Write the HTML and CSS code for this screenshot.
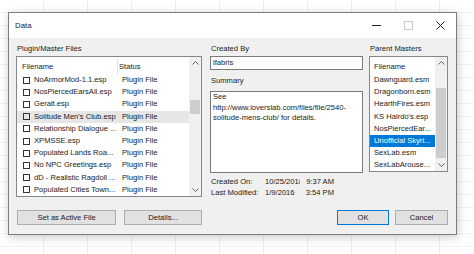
FILE: index.html
```html
<!DOCTYPE html>
<html lang="en">
<head>
  <meta charset="UTF-8">
  <meta name="viewport" content="width=device-width, initial-scale=1.0">
  <title>Data</title>
  <link rel="stylesheet" href="styles.css">
</head>
<body>
  <div class="desk">
    <div class="dialog">
      <div class="titlebar">
        <span class="title">Data</span>
        <div class="controls">
          <span class="ctl"><svg width="9" height="9" viewBox="0 0 9 9"><line x1="0" y1="4.5" x2="9" y2="4.5" stroke="#222" stroke-width="1"/></svg></span>
          <span class="ctl"><svg width="9" height="9" viewBox="0 0 9 9"><rect x="0.5" y="0.5" width="8" height="8" fill="none" stroke="#c8c8c8" stroke-width="1"/></svg></span>
          <span class="ctl"><svg width="9" height="9" viewBox="0 0 9 9"><path d="M0.5 0.5 L8.5 8.5 M8.5 0.5 L0.5 8.5" stroke="#222" stroke-width="1"/></svg></span>
        </div>
      </div>

      <div class="content">
        <div class="columns">
          <!-- plugin / master files -->
          <div class="col col-files">
            <div class="label">Plugin/Master Files</div>
            <div class="listbox files">
              <div class="list-body">
                <div class="list-head">
                  <span class="h-name">Filename</span>
                  <span class="h-status">Status</span>
                </div>
                <div class="row"><span class="c-name"><i class="check"></i>NoArmorMod-1.1.esp</span><span class="c-status">Plugin File</span></div>
                <div class="row"><span class="c-name"><i class="check"></i>NosPiercedEarsAll.esp</span><span class="c-status">Plugin File</span></div>
                <div class="row"><span class="c-name"><i class="check"></i>Geralt.esp</span><span class="c-status">Plugin File</span></div>
                <div class="row hover"><span class="c-name"><i class="check"></i>Solitude Men's Club.esp</span><span class="c-status">Plugin File</span></div>
                <div class="row"><span class="c-name"><i class="check"></i>Relationship Dialogue ...</span><span class="c-status">Plugin File</span></div>
                <div class="row"><span class="c-name"><i class="check"></i>XPMSSE.esp</span><span class="c-status">Plugin File</span></div>
                <div class="row"><span class="c-name"><i class="check"></i>Populated Lands Roa...</span><span class="c-status">Plugin File</span></div>
                <div class="row"><span class="c-name"><i class="check"></i>No NPC Greetings.esp</span><span class="c-status">Plugin File</span></div>
                <div class="row"><span class="c-name"><i class="check"></i>dD - Realistic Ragdoll ...</span><span class="c-status">Plugin File</span></div>
                <div class="row"><span class="c-name"><i class="check"></i>Populated Cities Town...</span><span class="c-status">Plugin File</span></div>
                <div class="row"><span class="c-name"><i class="check"></i></span></div>
              </div>
              <div class="scrollbar">
                <span class="arrow"><svg width="7" height="4" viewBox="0 0 7 4"><polyline points="0.5,3.5 3.5,0.5 6.5,3.5" fill="none" stroke="#606060"/></svg></span>
                <div class="track"><div class="thumb files-thumb"></div></div>
                <span class="arrow"><svg width="7" height="4" viewBox="0 0 7 4"><polyline points="0.5,0.5 3.5,3.5 6.5,0.5" fill="none" stroke="#606060"/></svg></span>
              </div>
            </div>
          </div>

          <!-- info -->
          <div class="col col-info">
            <div class="label">Created By</div>
            <div class="textbox">lfabris</div>
            <div class="label label-summary">Summary</div>
            <div class="textarea">See<br>http://www.loverslab.com/files/file/2540-<br>solitude-mens-club/ for details.</div>
            <div class="meta">
              <span class="m-label">Created On:</span>
              <span class="m-date">10/25/2018</span>
              <span class="m-time">9:37 AM</span>
            </div>
            <div class="meta">
              <span class="m-label">Last Modified:</span>
              <span class="m-date">1/9/2016</span>
              <span class="m-time">3:54 PM</span>
            </div>
          </div>

          <!-- parent masters -->
          <div class="col col-masters">
            <div class="label">Parent Masters</div>
            <div class="listbox masters">
              <div class="list-body">
                <div class="list-head"><span class="h-only">Filename</span></div>
                <div class="row"><span class="c-only">Dawnguard.esm</span></div>
                <div class="row"><span class="c-only">Dragonborn.esm</span></div>
                <div class="row"><span class="c-only">HearthFires.esm</span></div>
                <div class="row"><span class="c-only">KS Hairdo's.esp</span></div>
                <div class="row"><span class="c-only">NosPiercedEar...</span></div>
                <div class="row selected"><span class="c-only">Unofficial Skyri...</span></div>
                <div class="row"><span class="c-only">SexLab.esm</span></div>
                <div class="row"><span class="c-only">SexLabArouse...</span></div>
              </div>
              <div class="scrollbar">
                <span class="arrow"><svg width="7" height="4" viewBox="0 0 7 4"><polyline points="0.5,3.5 3.5,0.5 6.5,3.5" fill="none" stroke="#606060"/></svg></span>
                <div class="track"><div class="thumb masters-thumb"></div></div>
                <span class="arrow"><svg width="7" height="4" viewBox="0 0 7 4"><polyline points="0.5,0.5 3.5,3.5 6.5,0.5" fill="none" stroke="#606060"/></svg></span>
              </div>
            </div>
          </div>
        </div>

        <div class="footer">
          <div class="btn-group left">
            <button class="btn btn-active">Set as Active File</button>
            <button class="btn btn-details">Details...</button>
          </div>
          <div class="btn-group right">
            <button class="btn btn-ok">OK</button>
            <button class="btn btn-cancel">Cancel</button>
          </div>
        </div>
      </div>
    </div>
  </div>
</body>
</html>
```

FILE: styles.css
```css
html, body {
  margin: 0;
  height: 100%;
}
body {
  font-family: "Liberation Sans", Arial, sans-serif;
  font-size: 7.6px;
  color: #1a1a1a;
  background-color: #fff;
  background-image:
    repeating-linear-gradient(90deg, transparent 0 43px, #ededed 43px 44px),
    repeating-linear-gradient(180deg, transparent 0 12px, #f2f2f2 12px 13px);
  overflow: hidden;
}
.desk {
  padding: 12px 0 0 8px;
}
.dialog {
  width: 449px;
  height: 223px;
  box-sizing: border-box;
  border: 1px solid #7c7c7c;
  background: #f0f0f0;
  box-shadow: 1px 2px 9px rgba(0, 0, 0, 0.22);
  display: flex;
  flex-direction: column;
}
.titlebar {
  height: 25px;
  background: #fff;
  display: flex;
  align-items: center;
  padding-left: 6px;
  font-size: 7.8px;
}
.title {
  flex: 1;
}
.controls {
  display: flex;
  height: 100%;
}
.ctl {
  width: 32px;
  display: flex;
  align-items: center;
  justify-content: center;
}

.content {
  padding: 5px 8px 0 7px;
}
.columns {
  display: flex;
  gap: 8px;
  height: 155px;
}
.col {
  display: flex;
  flex-direction: column;
}
.col-files { width: 186px; }
.col-info { width: 153px; }
.col-masters { width: 79px; margin-left: -2px; }

.label {
  height: 12px;
  line-height: 12px;
  padding-left: 1px;
  margin-bottom: 1px;
  white-space: nowrap;
}

/* list boxes */
.listbox {
  display: flex;
  border: 1px solid #828790;
  background: #fff;
  box-sizing: border-box;
}
.listbox.files { height: 141px; }
.listbox.masters { height: 116px; }
.list-body {
  flex: 1;
  overflow: hidden;
  min-width: 0;
}
.list-head {
  height: 17px;
  display: flex;
  align-items: center;
}
.h-name {
  width: 95px;
  padding-left: 5px;
  border-right: 1px solid #e5e5e5;
  line-height: 15px;
  padding-top: 1px;
}
.h-status {
  padding-left: 1px;
  padding-top: 1px;
}
.h-only {
  padding-left: 4px;
  padding-top: 1px;
}
.row {
  height: 12.2px;
  line-height: 12.2px;
  display: flex;
  white-space: nowrap;
}
.row.hover { background: #e6e6e6; }
.row.selected { background: #0078d7; color: #fff; }
.c-name {
  width: 94px;
  padding-left: 6px;
  display: flex;
  align-items: center;
  overflow: hidden;
}
.c-status {
  padding-left: 5px;
}
.c-only {
  padding-left: 4px;
  overflow: hidden;
}
.check {
  flex: none;
  width: 7px;
  height: 7px;
  box-sizing: border-box;
  border: 1px solid #333;
  margin-right: 4px;
}

/* scrollbars */
.scrollbar {
  width: 12px;
  flex: none;
  background: #f0f0f0;
  display: flex;
  flex-direction: column;
}
.arrow {
  height: 12px;
  flex: none;
  display: flex;
  align-items: center;
  justify-content: center;
}
.track {
  flex: 1;
  padding: 0 1px;
}
.thumb {
  background: #cdcdcd;
}
.files-thumb { margin-top: 31px; height: 14px; }
.masters-thumb { margin-top: 19px; height: 70px; }

/* info column */
.textbox {
  height: 14px;
  line-height: 12px;
  box-sizing: border-box;
  border: 1px solid #7a7a7a;
  background: #fff;
  padding-left: 2px;
}
.label-summary {
  margin-top: 5px;
  margin-bottom: 4px;
}
.textarea {
  height: 82px;
  box-sizing: border-box;
  border: 1px solid #7a7a7a;
  background: #fff;
  padding: 0 2px;
  line-height: 10.5px;
  white-space: nowrap;
  overflow: hidden;
}
.meta {
  display: flex;
  height: 11px;
  line-height: 11px;
  white-space: nowrap;
}
.textarea + .meta { margin-top: 3px; }
.m-label {
  width: 54px;
  padding-left: 1px;
}
.m-date {
  width: 35px;
  overflow: hidden;
}
.m-time {
  width: 34px;
  text-align: right;
}

/* footer buttons */
.footer {
  display: flex;
  margin-top: 12px;
}
.btn-group {
  display: flex;
}
.btn-group.left {
  gap: 8px;
  margin-left: 1px;
}
.btn-group.right {
  gap: 6px;
  margin-left: auto;
}
.btn {
  height: 15px;
  padding: 0;
  font: inherit;
  color: #1a1a1a;
  background: #e1e1e1;
  border: 1px solid #adadad;
}
.btn-active { width: 99px; }
.btn-details { width: 78px; }
.btn-ok { width: 52px; border-color: #0078d7; }
.btn-cancel { width: 53px; }
```
